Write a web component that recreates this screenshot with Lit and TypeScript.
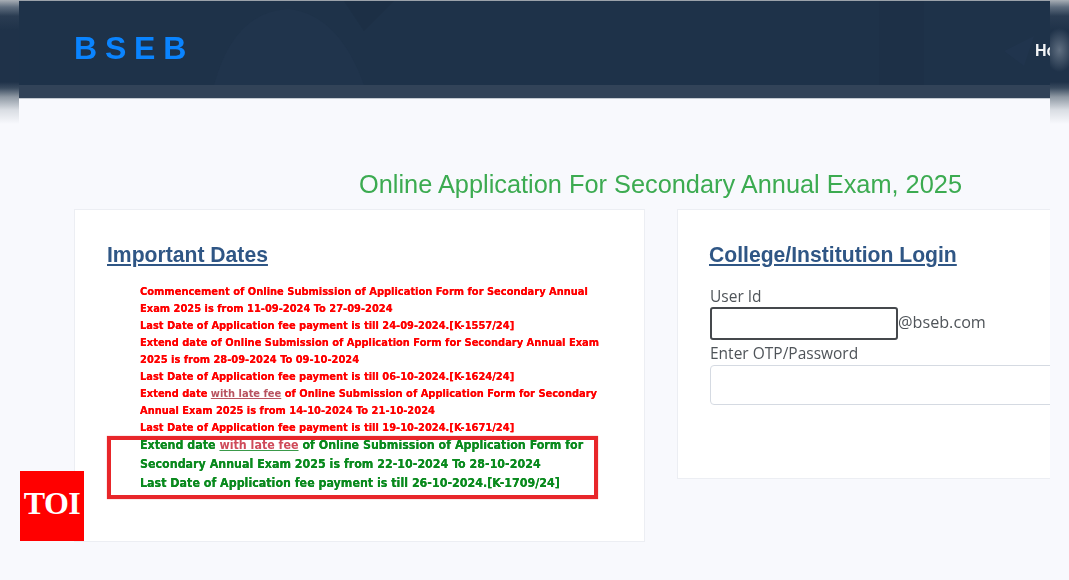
import { LitElement, html, css } from "lit";
import { customElement } from "lit/decorators.js";

type Line = { before: string; late?: string; after?: string };

const RED: Line[] = [
  { before: "Commencement of Online Submission of Application Form for Secondary Annual" },
  { before: "Exam 2025 is from 11-09-2024 To 27-09-2024" },
  { before: "Last Date of Application fee payment is till 24-09-2024.[K-1557/24]" },
  { before: "Extend date of Online Submission of Application Form for Secondary Annual Exam" },
  { before: "2025 is from 28-09-2024 To 09-10-2024" },
  { before: "Last Date of Application fee payment is till 06-10-2024.[K-1624/24]" },
  { before: "Extend date ", late: "with late fee", after: " of Online Submission of Application Form for Secondary" },
  { before: "Annual Exam 2025 is from 14-10-2024 To 21-10-2024" },
  { before: "Last Date of Application fee payment is till 19-10-2024.[K-1671/24]" },
];

const GREEN: Line[] = [
  { before: "Extend date ", late: "with late fee", after: " of Online Submission of Application Form for" },
  { before: "Secondary Annual Exam 2025 is from 22-10-2024 To 28-10-2024" },
  { before: "Last Date of Application fee payment is till 26-10-2024.[K-1709/24]" },
];

@customElement("app-root")
export class AppRoot extends LitElement {
  static styles = css`
    :host {
      display: block;
      width: 1069px;
      height: 580px;
      overflow: hidden;
      position: relative;
      background: #f8f9fd;
      font-family: "Liberation Sans", Arial, sans-serif;
    }
    .frame {
      display: flex;
      height: 580px;
    }
    .side {
      flex: 0 0 19px;
      height: 130px;
    }
    .side.left {
      background: linear-gradient(
        to bottom,
        #a9afb6 0,
        #5f6e7f 7px,
        #2a3c52 16px,
        #1f3249 30px,
        #1f3249 82px,
        #3a4b5f 88px,
        #8f99a4 97px,
        #d9dde3 110px,
        #f8f9fd 124px
      );
    }
    .side.right {
      background:
        radial-gradient(ellipse 15px 22px at 50% 50px, #5f6e80 0, rgba(95, 110, 128, 0) 100%),
        linear-gradient(
          to bottom,
          #a9afb6 0,
          #5f6e7f 7px,
          #2a3c52 16px,
          #1f3249 30px,
          #1f3249 82px,
          #3a4b5f 88px,
          #8f99a4 97px,
          #d9dde3 110px,
          #f8f9fd 124px
        );
    }
    .page {
      flex: 0 0 1031px;
      width: 1031px;
      overflow: hidden;
      display: flex;
      flex-direction: column;
    }
    .top {
      position: relative;
      height: 84px;
      border-top: 1px solid #9ba2aa;
      background: #1e3249;
      display: flex;
      align-items: center;
      justify-content: space-between;
      padding: 0 0 0 55px;
      overflow: hidden;
      flex: none;
    }
    .texture {
      position: absolute;
      inset: 0;
      width: 100%;
      height: 100%;
    }
    .brand {
      position: relative;
      font-size: 32px;
      font-weight: 700;
      letter-spacing: 7.8px;
      color: #0a84ff;
      line-height: 32px;
      margin-top: 9px;
      filter: blur(0.4px);
    }
    .nav {
      position: relative;
      color: #f2f4f6;
      font-size: 16px;
      font-weight: 700;
      width: 15px;
      overflow: hidden;
      margin-top: 15px;
      filter: blur(0.4px);
    }
    .sub {
      flex: none;
      height: 13px;
      background: #324358;
      border-bottom: 1px solid #c4cad1;
    }
    .title {
      flex: none;
      margin: 72px 0 0 340px;
      height: 38px;
      line-height: 27px;
      font-size: 25.35px;
      font-weight: 400;
      color: #3cab51;
      white-space: nowrap;
      filter: blur(0.3px);
    }
    .cards {
      display: flex;
      align-items: flex-start;
      gap: 32px;
      padding-left: 55px;
    }
    .card {
      flex: none;
      background: #fff;
      border: 1px solid #eceef3;
      box-sizing: border-box;
    }
    .dates {
      position: relative;
      width: 571px;
      height: 333px;
      padding: 32px 0 0 32px;
    }
    .login {
      width: 420px;
      height: 270px;
      padding: 32px 0 0 31px;
    }
    h2 {
      margin: 0;
      font-size: 21.15px;
      line-height: 26px;
      font-weight: 700;
      color: #2f5685;
      text-decoration: underline;
      white-space: nowrap;
      filter: blur(0.3px);
    }
    .notes {
      margin: 15px 0 0 33px;
      font-family: "DejaVu Sans", sans-serif;
      font-stretch: condensed;
      font-weight: 700;
      white-space: nowrap;
      filter: blur(0.3px);
    }
    .red {
      color: #ff0000;
      font-size: 11px;
      line-height: 17px;
      text-shadow: 0 0 0.6px #ff0000;
    }
    .green {
      color: #0a8a1e;
      font-size: 12.35px;
      line-height: 19px;
      text-shadow: 0 0 0.6px #0a8a1e;
    }
    .late {
      text-decoration: underline;
    }
    .red .late {
      color: #b8525f;
      text-shadow: none;
    }
    .green .late {
      color: #cf4a5a;
      text-decoration-color: #3a9a4a;
      text-shadow: none;
    }
    .box {
      position: absolute;
      left: 32px;
      top: 226px;
      width: 491px;
      height: 63px;
      box-sizing: border-box;
      border: 4px solid #e8262a;
      box-shadow: 0 0 1px rgba(232, 38, 42, 0.6);
    }
    .field {
      font-family: "Open Sans", sans-serif;
      font-size: 15.5px;
      color: #4f5459;
      margin-left: 1px;
      filter: blur(0.25px);
    }
    .label {
      display: block;
      line-height: 21px;
    }
    .userlabel {
      margin-top: 18px;
    }
    .row {
      display: flex;
      align-items: center;
      height: 33px;
    }
    .row span {
      font-size: 16.2px;
      margin-bottom: 4px;
    }
    .uid {
      width: 188px;
      height: 33px;
      box-sizing: border-box;
      border: 2px solid #45484c;
      border-radius: 3px;
      background: #fff;
      padding: 0;
      flex: none;
    }
    .pwlabel {
      margin-top: 3px;
    }
    .pw {
      display: block;
      width: 380px;
      height: 40px;
      margin-top: 1px;
      box-sizing: border-box;
      border: 1px solid #d5dae2;
      border-radius: 4px;
      background: #fff;
      padding: 0;
    }
    .toi {
      position: absolute;
      left: 20px;
      top: 471px;
      width: 64px;
      height: 70px;
      padding-bottom: 6px;
      box-sizing: border-box;
      background: #ff0000;
      color: #fff;
      font-family: "Liberation Serif", serif;
      font-weight: 700;
      font-size: 32px;
      display: flex;
      align-items: center;
      justify-content: center;
      letter-spacing: -0.5px;
    }
  `;

  private renderLine(l: Line) {
    return html`<div>${l.before}${l.late ? html`<span class="late">${l.late}</span>` : ""}${l.after ?? ""}</div>`;
  }

  render() {
    return html`
      <div class="frame">
        <div class="side left"></div>
        <div class="page">
          <header class="top">
            <svg class="texture" viewBox="0 0 1031 84" preserveAspectRatio="none" aria-hidden="true">
              <path d="M195 84 Q215 10 270 8 Q320 14 345 84Z" fill="#20344c" />
              <path d="M325 0 L345 30 L375 0Z" fill="#1c2f45" />
              <path d="M985 50 L1015 35 L1005 65Z" fill="#20344d" />
              <rect x="860" y="0" width="45" height="84" fill="#1d3047" />
            </svg>
            <div class="brand">BSEB</div>
            <div class="nav">Home</div>
          </header>
          <div class="sub"></div>
          <h1 class="title">Online Application For Secondary Annual Exam, 2025</h1>
          <div class="cards">
            <section class="card dates">
              <h2>Important Dates</h2>
              <div class="notes">
                <div class="red">${RED.map((l) => this.renderLine(l))}</div>
                <div class="green">${GREEN.map((l) => this.renderLine(l))}</div>
              </div>
              <div class="box"></div>
            </section>
            <section class="card login">
              <h2>College/Institution Login</h2>
              <div class="field">
                <label class="label userlabel" for="uid">User Id</label>
                <div class="row"><input class="uid" id="uid" type="text" /><span>@bseb.com</span></div>
                <label class="label pwlabel" for="pw">Enter OTP/Password</label>
                <input class="pw" id="pw" type="password" />
              </div>
            </section>
          </div>
        </div>
        <div class="side right"></div>
      </div>
      <div class="toi">TOI</div>
    `;
  }
}
